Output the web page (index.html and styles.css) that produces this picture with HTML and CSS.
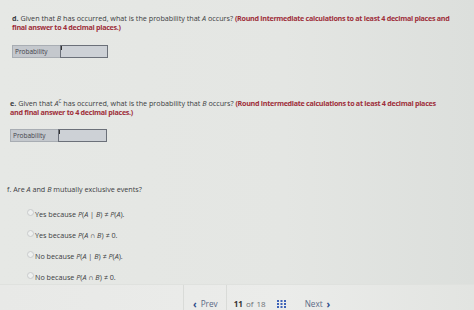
FILE: index.html
```html
<!DOCTYPE html>
<html>
<head>
<meta charset="utf-8">
<link rel="stylesheet" href="styles.css">
</head>
<body>
<div class="page">
  <div class="part part-d">
    <p class="prompt"><b>d.</b> Given that <i>B</i> has occurred, what is the probability that <i>A</i> occurs? <span class="note">(Round intermediate calculations to at least 4 decimal places and final answer to 4 decimal places.)</span></p>
    <div class="answer"><span class="label">Probability</span><span class="input"><span class="caret"></span></span></div>
  </div>
  <div class="part part-e">
    <p class="prompt"><b>e.</b> Given that <i>A</i><sup>C</sup> has occurred, what is the probability that <i>B</i> occurs? <span class="note">(Round intermediate calculations to at least 4 decimal places and final answer to 4 decimal places.)</span></p>
    <div class="answer"><span class="label">Probability</span><span class="input"><span class="caret"></span></span></div>
  </div>
  <div class="part part-f">
    <p class="prompt">f. Are <i>A</i> and <i>B</i> mutually exclusive events?</p>
    <ul class="options">
      <li><span class="radio"></span><span class="opt">Yes because <i>P</i>(<i>A</i> | <i>B</i>) ≠ <i>P</i>(<i>A</i>).</span></li>
      <li><span class="radio"></span><span class="opt">Yes because <i>P</i>(<i>A</i> ∩ <i>B</i>) ≠ 0.</span></li>
      <li><span class="radio"></span><span class="opt">No because <i>P</i>(<i>A</i> | <i>B</i>) ≠ <i>P</i>(<i>A</i>).</span></li>
      <li><span class="radio"></span><span class="opt">No because <i>P</i>(<i>A</i> ∩ <i>B</i>) ≠ 0.</span></li>
    </ul>
  </div>
  <div class="nav">
    <span class="prev"><span class="chev chev-l">&lsaquo;</span><span>Prev</span></span>
    <span class="count"><span><b>11</b> of 18</span></span>
    <svg class="grid" width="9" height="8" viewBox="0 0 9 8">
      <rect x="0" y="0" width="2" height="2"/><rect x="3.5" y="0" width="2" height="2"/><rect x="7" y="0" width="2" height="2"/>
      <rect x="0" y="3" width="2" height="2"/><rect x="3.5" y="3" width="2" height="2"/><rect x="7" y="3" width="2" height="2"/>
      <rect x="0" y="6" width="2" height="2"/><rect x="3.5" y="6" width="2" height="2"/><rect x="7" y="6" width="2" height="2"/>
    </svg>
    <span class="next"><span>Next</span><span class="chev chev-r">&rsaquo;</span></span>
  </div>
</div>
</body>
</html>
```
FILE: styles.css
```css
html, body {
  margin: 0;
  padding: 0;
}
body {
  width: 474px;
  height: 310px;
  overflow: hidden;
  background: linear-gradient(90deg, #e6e8e5 0%, #e4e6e3 60%, #dcdfdc 100%);
  font-family: "Open Sans", "Liberation Sans", sans-serif;
  color: #3b3d42;
}
.page {
  height: 310px;
  display: flex;
  flex-direction: column;
}
.prompt {
  margin: 0;
  font-size: 7.2px;
  line-height: 9px;
  width: 438px;
}
.part-e .prompt {
  width: 430px;
}
.prompt b {
  font-weight: 700;
}
.note {
  color: #9e2f3a;
  font-weight: 700;
  letter-spacing: -0.3px;
}
sup {
  font-size: 4.5px;
  vertical-align: 3px;
  line-height: 0;
}
.part-d {
  padding: 14px 0 0 12px;
}
.part-e {
  padding: 41px 0 0 10px;
}
.part-f {
  padding: 43px 0 0 7px;
}
.answer {
  display: flex;
  margin-top: 13px;
  height: 13px;
  width: 96px;
}
.part-e .answer {
  margin-top: 12px;
  width: 97px;
}
.label {
  flex: 0 0 48px;
  background: #c4c8cd;
  border: 1px solid #a8adb3;
  border-right: none;
  font-size: 6.5px;
  line-height: 11px;
  padding-left: 2px;
  color: #3f424a;
  box-sizing: border-box;
}
.input {
  flex: 1;
  background: #cdd1d6;
  border: 1px solid #6b7079;
  box-sizing: border-box;
  position: relative;
}
.caret {
  position: absolute;
  left: 0;
  top: 0;
  width: 1px;
  height: 4px;
  background: #333;
}
.options {
  list-style: none;
  margin: 16px 0 0 0;
  padding: 0 0 0 20px;
}
.options li {
  display: flex;
  align-items: center;
  font-size: 7.2px;
  line-height: 9px;
  height: 9px;
  margin-bottom: 12px;
}
.options li:last-child {
  margin-bottom: 0;
}
.radio {
  width: 5px;
  height: 5px;
  border: 1px solid #c9cbcc;
  border-radius: 50%;
  background: #eef0ef;
  margin-right: 1px;
  margin-top: -5px;
}
.nav {
  margin-top: auto;
  height: 26px;
  border-top: 1px solid #dfe1de;
  background: linear-gradient(90deg, #e8e9e7, #ebecea 60%, #e2e4e1);
  display: flex;
  align-items: stretch;
  padding-left: 183px;
  box-sizing: border-box;
  font-size: 8.2px;
  color: #5b6270;
}
.prev, .count, .next {
  display: flex;
  align-items: center;
  padding-top: 12px;
}
.prev {
  color: #5b6a86;
  border-left: 1px solid #d9dbd8;
  border-right: 1px solid #d9dbd8;
  padding-left: 9px;
  padding-right: 8px;
}
.chev {
  color: #2a4a8a;
  font-weight: 700;
  font-size: 10px;
}
.chev-l {
  margin-right: 4px;
}
.chev-r {
  margin-left: 4px;
}
.count {
  margin-left: 7px;
  color: #6b7078;
  font-size: 8px;
  word-spacing: 1px;
}
.count b {
  color: #333;
}
.grid {
  margin-left: 11px;
  align-self: center;
  margin-top: 12px;
  fill: #3e63b8;
}
.next {
  margin-left: 19px;
  color: #5b6a86;
}
```
